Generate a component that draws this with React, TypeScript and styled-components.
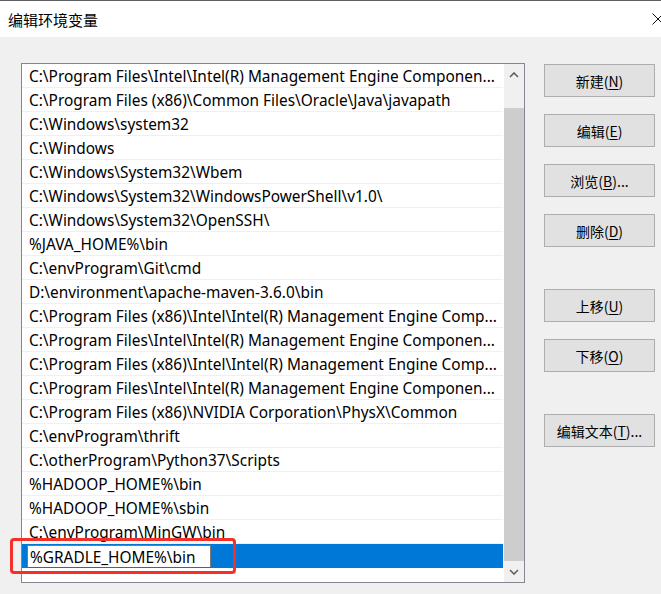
import styled, { createGlobalStyle } from "styled-components";

const GlobalStyle = createGlobalStyle`
  html, body {
    margin: 0;
    padding: 0;
    background: #f0f0f0;
  }
  body {
    font-family: "Noto Sans", "Noto Sans CJK SC", sans-serif;
    color: #000;
  }
`;

const Window = styled.div`
  position: relative;
  width: 661px;
  height: 594px;
  box-sizing: border-box;
  border-top: 1px solid #5f5f5f;
  background: #f0f0f0;
  overflow: hidden;
`;

const TitleBar = styled.div`
  height: 36px;
  background: #fff;
  display: flex;
  align-items: center;
  justify-content: space-between;
  padding: 0 3px 0 8px;
`;

const Title = styled.span`
  font-family: "Noto Sans CJK SC", sans-serif;
  font-size: 15px;
  margin-top: 1px;
`;

const CloseButton = styled.span`
  width: 46px;
  height: 36px;
  display: flex;
  align-items: center;
  justify-content: center;
  margin-right: -23px;
`;

const Body = styled.div`
  display: flex;
  gap: 19px;
  padding: 26px 0 0 21px;
`;

const ListBox = styled.div`
  width: 504px;
  height: 520px;
  box-sizing: border-box;
  border: 1px solid #828790;
  background: #fff;
  display: flex;
`;

const Rows = styled.div`
  width: 481px;
  overflow: hidden;
`;

const Row = styled.div<{ $selected?: boolean }>`
  height: 24px;
  box-sizing: border-box;
  border-bottom: 1px solid #f0f0f0;
  padding: 2px 0 0 7px;
  display: flex;
  align-items: center;
  font-size: 15.4px;
  white-space: nowrap;
  overflow: hidden;
  background: ${(p) => (p.$selected ? "#0078d7" : "#fff")};
  border-color: ${(p) => (p.$selected ? "#0078d7" : "#f0f0f0")};
`;

const Editor = styled.div`
  width: 184px;
  height: 24px;
  box-sizing: border-box;
  margin: -1px 0 0 -2px;
  align-self: flex-start;
  background: #fff;
  border: 1px solid #7a7a7a;
  padding: 1px 0 0 2px;
  display: flex;
  align-items: center;
  font-size: 15.4px;
`;

const ScrollBar = styled.div`
  width: 20px;
  margin-left: 1px;
  background: #f0f0f0;
  display: flex;
  flex-direction: column;
`;

const ArrowBox = styled.div`
  height: 21px;
  display: flex;
  align-items: center;
  justify-content: center;
`;

const Track = styled.div<{ $size: number }>`
  height: ${(p) => p.$size}px;
`;

const Thumb = styled.div`
  flex: 1;
  background: #cdcdcd;
`;

const Buttons = styled.div`
  display: flex;
  flex-direction: column;
  padding-top: 1px;
`;

const Button = styled.div<{ $gap: number }>`
  width: 111px;
  height: 33px;
  box-sizing: border-box;
  margin-top: ${(p) => p.$gap}px;
  background: #e1e1e1;
  border: 1px solid #adadad;
  display: flex;
  align-items: center;
  justify-content: center;
  font-family: "Noto Sans CJK SC", sans-serif;
  font-size: 14px;
`;

const Key = styled.span`
  text-decoration: underline;
  text-underline-offset: 2px;
`;

const Marker = styled.div`
  position: absolute;
  left: 10px;
  top: 537px;
  width: 226px;
  height: 36px;
  box-sizing: border-box;
  border: 3px solid #f5302a;
  border-radius: 4px;
`;

const paths = [
  "C:\\Program Files\\Intel\\Intel(R) Management Engine Componen...",
  "C:\\Program Files (x86)\\Common Files\\Oracle\\Java\\javapath",
  "C:\\Windows\\system32",
  "C:\\Windows",
  "C:\\Windows\\System32\\Wbem",
  "C:\\Windows\\System32\\WindowsPowerShell\\v1.0\\",
  "C:\\Windows\\System32\\OpenSSH\\",
  "%JAVA_HOME%\\bin",
  "C:\\envProgram\\Git\\cmd",
  "D:\\environment\\apache-maven-3.6.0\\bin",
  "C:\\Program Files (x86)\\Intel\\Intel(R) Management Engine Comp...",
  "C:\\Program Files\\Intel\\Intel(R) Management Engine Componen...",
  "C:\\Program Files (x86)\\Intel\\Intel(R) Management Engine Comp...",
  "C:\\Program Files\\Intel\\Intel(R) Management Engine Componen...",
  "C:\\Program Files (x86)\\NVIDIA Corporation\\PhysX\\Common",
  "C:\\envProgram\\thrift",
  "C:\\otherProgram\\Python37\\Scripts",
  "%HADOOP_HOME%\\bin",
  "%HADOOP_HOME%\\sbin",
  "C:\\envProgram\\MinGW\\bin",
];

const buttons = [
  { label: "新建", key: "N", tail: "", gap: 0 },
  { label: "编辑", key: "E", tail: "", gap: 17 },
  { label: "浏览", key: "B", tail: "...", gap: 17 },
  { label: "删除", key: "D", tail: "", gap: 17 },
  { label: "上移", key: "U", tail: "", gap: 42 },
  { label: "下移", key: "O", tail: "", gap: 17 },
  { label: "编辑文本", key: "T", tail: "...", gap: 42 },
];

const Chevron = ({ down }: { down?: boolean }) => (
  <svg width="10" height="6" viewBox="0 0 10 6">
    <path
      d={down ? "M1 1 L5 5 L9 1" : "M1 5 L5 1 L9 5"}
      fill="none"
      stroke="#606060"
      strokeWidth="1.6"
    />
  </svg>
);

export default function App() {
  return (
    <>
      <GlobalStyle />
      <Window>
        <TitleBar>
          <Title>编辑环境变量</Title>
          <CloseButton>
            <svg width="12" height="12" viewBox="0 0 12 12">
              <path d="M0.5 0.5 L11.5 11.5 M11.5 0.5 L0.5 11.5" stroke="#111" strokeWidth="1" />
            </svg>
          </CloseButton>
        </TitleBar>

        <Body>
          <ListBox>
            <Rows>
              {paths.map((p, i) => (
                <Row key={i}>{p}</Row>
              ))}
              <Row $selected>
                <Editor>%GRADLE_HOME%\bin</Editor>
              </Row>
              <Row />
            </Rows>
            <ScrollBar>
              <ArrowBox>
                <Chevron />
              </ArrowBox>
              <Track $size={23} />
              <Thumb />
              <ArrowBox>
                <Chevron down />
              </ArrowBox>
            </ScrollBar>
          </ListBox>

          <Buttons>
            {buttons.map((b) => (
              <Button key={b.key} $gap={b.gap}>
                {b.label}(<Key>{b.key}</Key>){b.tail}
              </Button>
            ))}
          </Buttons>
        </Body>

        <Marker />
      </Window>
    </>
  );
}
